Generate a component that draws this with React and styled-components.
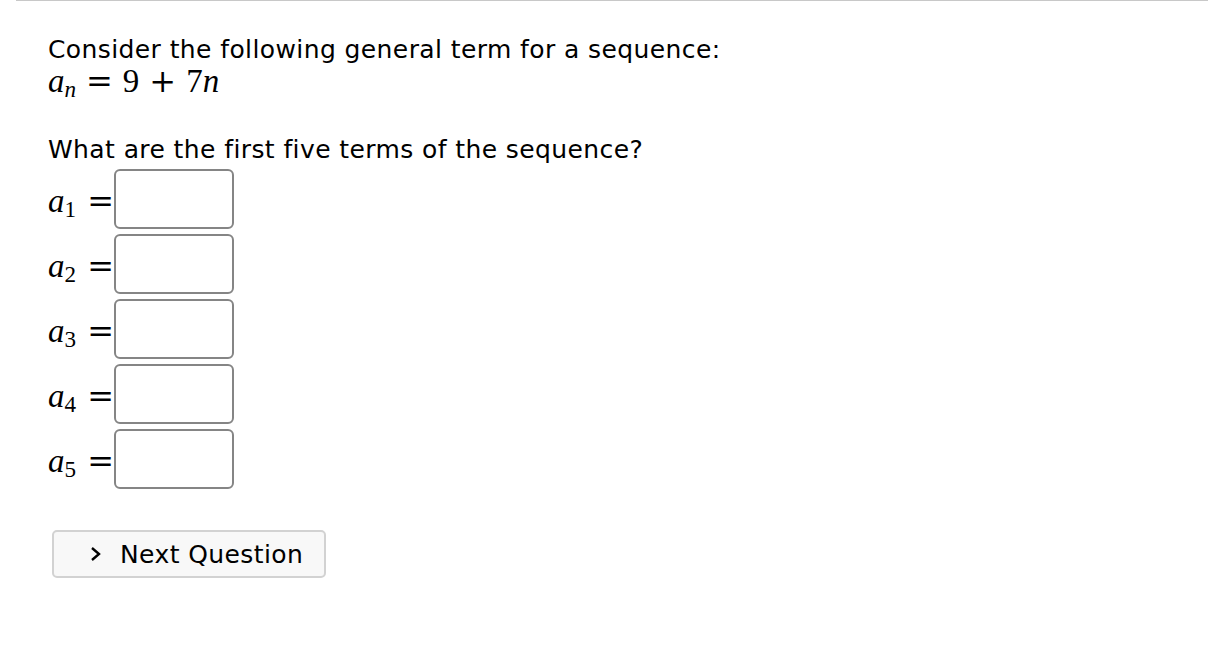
import React from 'react'
import styled, { createGlobalStyle } from 'styled-components'

const GlobalStyle = createGlobalStyle`
  body {
    margin: 0;
    background: #fff;
    font-family: "DejaVu Sans", Verdana, sans-serif;
    color: #000;
  }
`

const Page = styled.div`
  margin-left: 16px;
  border-top: 1px solid #c8c8c8;
  padding: 33px 0 0 32px;
  height: 636px;
`

const Prompt = styled.p`
  margin: 0;
  font-size: 25px;
  letter-spacing: 0.4px;
  line-height: 32px;
`

const Formula = styled.div`
  font-family: "Liberation Serif", "DejaVu Serif", serif;
  font-size: 33px;
  line-height: 30px;
  margin-bottom: 38px;
`

const Var = styled.i`
  font-style: italic;
`

const Sub = styled.sub`
  font-size: 0.7em;
  vertical-align: -0.2em;
  line-height: 0;
`

const Op = styled.span`
  font-family: "DejaVu Serif", serif;
  font-size: 32px;
  margin: 0 10px;
`

const Terms = styled.div`
  display: flex;
  flex-direction: column;
  gap: 5px;
  margin-top: 3px;
`

const Row = styled.div`
  display: flex;
  align-items: center;
`

const Label = styled.div`
  font-family: "Liberation Serif", "DejaVu Serif", serif;
  font-size: 33px;
  width: 66px;
  display: flex;
  align-items: baseline;
  justify-content: space-between;
  padding-top: 4px;
`

const Eq = styled.span`
  font-family: "DejaVu Serif", serif;
  font-size: 32px;
`

const Box = styled.input`
  width: 120px;
  height: 60px;
  box-sizing: border-box;
  border: 2px solid #858585;
  border-radius: 6px;
  background: #fff;
  outline: none;
`

const NextButton = styled.button`
  margin: 41px 0 0 4px;
  width: 274px;
  height: 48px;
  box-sizing: border-box;
  border: 2px solid #d2d2d2;
  border-radius: 5px;
  background: #f8f8f8;
  display: flex;
  align-items: center;
  gap: 18px;
  padding: 0 0 0 36px;
  font-family: "DejaVu Sans", Verdana, sans-serif;
  font-size: 25px;
  letter-spacing: 0.4px;
  color: #000;
`

const Chevron = () => (
  <svg width="12" height="16" viewBox="0 0 12 16">
    <path d="M2 2l7 6-7 6" fill="none" stroke="#000" strokeWidth="2.4" />
  </svg>
)

export default function App() {
  return (
    <>
      <GlobalStyle />
      <Page>
        <Prompt>Consider the following general term for a sequence:</Prompt>
        <Formula>
          <Var>a</Var>
          <Sub><Var>n</Var></Sub>
          <Op>=</Op>9<Op>+</Op>7<Var>n</Var>
        </Formula>
        <Prompt>What are the first five terms of the sequence?</Prompt>
        <Terms>
          {[1, 2, 3, 4, 5].map(i => (
            <Row key={i}>
              <Label>
                <span>
                  <Var>a</Var>
                  <Sub>{i}</Sub>
                </span>
                <Eq>=</Eq>
              </Label>
              <Box type="text" />
            </Row>
          ))}
        </Terms>
        <NextButton>
          <Chevron />
          Next Question
        </NextButton>
      </Page>
    </>
  )
}
